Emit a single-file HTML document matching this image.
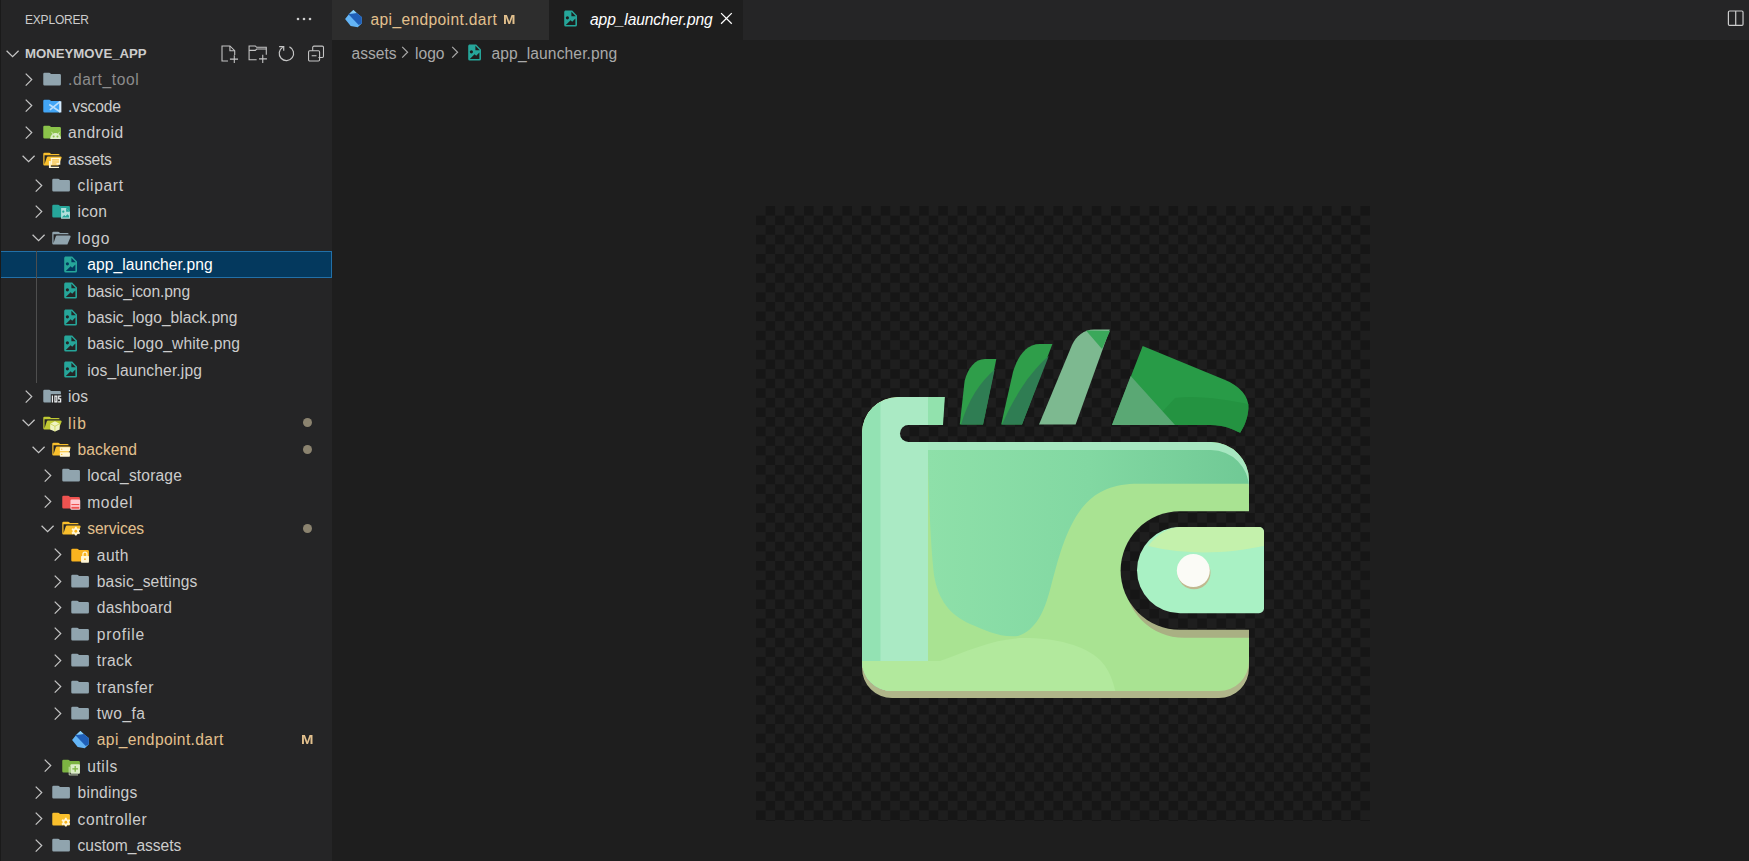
<!DOCTYPE html>
<html><head><meta charset="utf-8"><style>
*{margin:0;padding:0;box-sizing:border-box}
html,body{width:1749px;height:861px;overflow:hidden;background:#1e1e1e;font-family:"Liberation Sans", sans-serif}
#side{position:absolute;left:0;top:0;width:332px;height:861px;background:#252526;overflow:hidden}
#side .edge{position:absolute;left:0;top:0;width:1px;height:861px;background:#1a1a1a}
.title{position:absolute;left:25px;top:13px;font-size:12px;line-height:14px;color:#cccccc;letter-spacing:-0.2px}
.more{position:absolute;left:296px;top:17px;width:16px;height:4px}
.hdr{position:absolute;left:0;top:40px;width:332px;height:26.4px}
.hdr .t{position:absolute;left:25px;top:1px;font-size:13.2px;line-height:26.4px;font-weight:700;color:#cccccc}
.row{position:absolute;left:0;width:332px;height:26.4px}
.row.sel{background:#04395e;outline:1px solid #2270a8;outline-offset:-1px}
.row span{position:absolute;top:0}
.row .lbl{top:1px}
.chev,.ic{height:26.4px;display:flex;align-items:center}
.lbl{font-size:15.6px;line-height:26.4px;white-space:pre}
.dot{left:302.7px;top:8.5px !important;width:9.4px;height:9.4px;border-radius:50%;background:#8b836f}
.badge{left:301px;top:1px !important;font-size:13px;font-weight:700;line-height:26.4px;color:#e2c08d;transform:scaleX(1.15);transform-origin:0 0}
.guide{position:absolute;width:1px;background:#4e4e4e}
#tabs{position:absolute;left:332px;top:0;width:1417px;height:40px;background:#252526}
.tab{position:absolute;top:0;height:40px}
.tab .ic{position:absolute;top:0}
.tab .tt{position:absolute;top:0;font-size:15.6px;line-height:39px;white-space:pre}
#crumbs{position:absolute;left:332px;top:40px;width:1417px;height:26.4px;background:#1e1e1e}
#crumbs span{position:absolute;top:1px;font-size:15.6px;line-height:26.4px;color:#a9a9a9;white-space:pre}
#img{position:absolute;left:756px;top:206px;width:614px;height:615px;
 background:conic-gradient(#161616 25%, #1e1e1e 0 50%, #161616 0 75%, #1e1e1e 0) 0 0/19.2px 19.2px}
#img svg{position:absolute;left:0;top:0}
</style></head><body>
<div id="side">
 <div class="title">EXPLORER</div>
 <svg class="more" viewBox="0 0 16 4"><circle cx="2" cy="2" r="1.3" fill="#cccccc"/><circle cx="8" cy="2" r="1.3" fill="#cccccc"/><circle cx="14" cy="2" r="1.3" fill="#cccccc"/></svg>
 <div class="hdr">
  <svg style="position:absolute;left:3.3px;top:3.6px" viewBox="0 0 16 16" width="19.2" height="19.2"><path d="M3 5.6 8 10.6 13 5.6" fill="none" stroke="#c5c5c5" stroke-width="1.05"/></svg>
  <span class="t">MONEYMOVE_APP</span>
  <svg style="position:absolute;left:219px;top:3.6px" viewBox="0 0 16 16" width="19.2" height="19.2" fill="none" stroke="#c5c5c5" stroke-width="0.9"><path d="M7.5 14.2H2.5V1.6H9.1L13.1 5.6V9.2"/><path d="M9.1 1.6V5.6H13.1"/><path d="M12.75 9.3V15.8M9.1 12.6H16.4"/></svg>
<svg style="position:absolute;left:248px;top:3.6px" viewBox="0 0 16 16" width="19.2" height="19.2" fill="none" stroke="#c5c5c5" stroke-width="0.9"><path d="M7.2 13.1H0.9V1.6H6.1L7.2 2.75H15.25V9"/><path d="M0.9 5.3H6.1L7.2 4.2H15.25"/><path d="M12.3 9V15.8M9.2 12.4H15.8"/></svg>
<svg style="position:absolute;left:277px;top:3.6px" viewBox="0 0 16 16" width="19.2" height="19.2" fill="none" stroke="#c5c5c5" stroke-width="1"><path d="M10.4 2.4A6 6 0 1 1 4.74 2.7"/><path d="M1.75 2.25H5.6V5.7"/></svg>
<svg style="position:absolute;left:306.5px;top:3.6px" viewBox="0 0 16 16" width="19.2" height="19.2" fill="none" stroke="#c5c5c5" stroke-width="0.9"><path d="M4.75 5.6V2.8a1 1 0 0 1 1-1h7a1 1 0 0 1 1 1v7.5a1 1 0 0 1-1 1h-3.2"/><rect x="1.3" y="5.6" width="9.2" height="8.6" rx="1"/><path d="M3.9 9.8h4"/></svg>
 </div>
 <div class="row" style="top:66.40px"><span class="chev" style="left:19.10px"><svg viewBox="0 0 16 16" width="19.2" height="19.2"><path d="M5.6 3 10.6 8 5.6 13" fill="none" stroke="#c5c5c5" stroke-width="1.05"/></svg></span><span class="ic" style="left:41.30px"><svg viewBox="0 0 32 32" width="20.2" height="20.2" style="margin-left:0.3px"><path fill="#90a4ae" d="M13.844 7.536l-1.288-1.072A2 2 0 0 0 11.276 6H4a2 2 0 0 0-2 2v16a2 2 0 0 0 2 2h24a2 2 0 0 0 2-2V10a2 2 0 0 0-2-2H15.124a2 2 0 0 1-1.28-.464z"/></svg></span><span class="lbl" style="left:68.00px;color:#8c8c8c;letter-spacing:0.644px">.dart_tool</span></div><div class="row" style="top:92.80px"><span class="chev" style="left:19.10px"><svg viewBox="0 0 16 16" width="19.2" height="19.2"><path d="M5.6 3 10.6 8 5.6 13" fill="none" stroke="#c5c5c5" stroke-width="1.05"/></svg></span><span class="ic" style="left:41.30px"><svg viewBox="0 0 32 32" width="20.2" height="20.2" style="margin-left:0.3px"><path fill="#42a5f5" d="M13.844 7.536l-1.288-1.072A2 2 0 0 0 11.276 6H4a2 2 0 0 0-2 2v16a2 2 0 0 0 2 2h24a2 2 0 0 0 2-2V10a2 2 0 0 0-2-2H15.124a2 2 0 0 1-1.28-.464z"/><path d="M11.5 13.5 28.5 25M12.5 22 28.5 9" stroke="#bbdefb" stroke-width="2.6" fill="none"/><rect x="27.3" y="8.5" width="3.4" height="17.5" fill="#d6ebfd"/></svg></span><span class="lbl" style="left:68.00px;color:#cccccc;letter-spacing:-0.117px">.vscode</span></div><div class="row" style="top:119.20px"><span class="chev" style="left:19.10px"><svg viewBox="0 0 16 16" width="19.2" height="19.2"><path d="M5.6 3 10.6 8 5.6 13" fill="none" stroke="#c5c5c5" stroke-width="1.05"/></svg></span><span class="ic" style="left:41.30px"><svg viewBox="0 0 32 32" width="20.2" height="20.2" style="margin-left:0.3px"><path fill="#8bc34a" d="M13.844 7.536l-1.288-1.072A2 2 0 0 0 11.276 6H4a2 2 0 0 0-2 2v16a2 2 0 0 0 2 2h24a2 2 0 0 0 2-2V10a2 2 0 0 0-2-2H15.124a2 2 0 0 1-1.28-.464z"/><path fill="#dcedc8" d="M13 27c0-6 4.5-9.5 8.5-9.5s8.5 3.5 8.5 9.5z"/><path d="M15 15.5l2.5 3.5M28 15.5l-2.5 3.5" stroke="#dcedc8" stroke-width="1.3"/><circle cx="18.5" cy="23" r="1.6" fill="#8bc34a"/><circle cx="24.5" cy="23" r="1.6" fill="#8bc34a"/></svg></span><span class="lbl" style="left:68.00px;color:#cccccc;letter-spacing:0.533px">android</span></div><div class="row" style="top:145.60px"><span class="chev" style="left:19.10px"><svg viewBox="0 0 16 16" width="19.2" height="19.2"><path d="M3 5.6 8 10.6 13 5.6" fill="none" stroke="#c5c5c5" stroke-width="1.05"/></svg></span><span class="ic" style="left:41.30px"><svg viewBox="0 0 32 32" width="20.2" height="20.2" style="margin-left:0.3px"><path fill="#f9bf2c" d="M28.967 12H9.442a2 2 0 0 0-1.898 1.368L4 24V10h24a2 2 0 0 0-2-2H15.124a2 2 0 0 1-1.28-.464l-1.288-1.072A2 2 0 0 0 11.276 6H4a2 2 0 0 0-2 2v16a2 2 0 0 0 2 2h22l4.805-11.212A2 2 0 0 0 28.967 12z"/><path fill="#fff6d5" d="M14 14h15v11H14z"/><path fill="#fff6d5" d="M11 19h3v9h13v2H11z"/><rect x="16" y="16.5" width="11" height="1.6" fill="#f6b21c"/><rect x="16" y="19.8" width="11" height="1.6" fill="#f6b21c"/><rect x="16" y="23" width="7" height="1.4" fill="#f6b21c"/></svg></span><span class="lbl" style="left:68.00px;color:#cccccc;letter-spacing:-0.260px">assets</span></div><div class="row" style="top:172.00px"><span class="chev" style="left:28.70px"><svg viewBox="0 0 16 16" width="19.2" height="19.2"><path d="M5.6 3 10.6 8 5.6 13" fill="none" stroke="#c5c5c5" stroke-width="1.05"/></svg></span><span class="ic" style="left:50.90px"><svg viewBox="0 0 32 32" width="20.2" height="20.2" style="margin-left:0.3px"><path fill="#90a4ae" d="M13.844 7.536l-1.288-1.072A2 2 0 0 0 11.276 6H4a2 2 0 0 0-2 2v16a2 2 0 0 0 2 2h24a2 2 0 0 0 2-2V10a2 2 0 0 0-2-2H15.124a2 2 0 0 1-1.28-.464z"/></svg></span><span class="lbl" style="left:77.60px;color:#cccccc;letter-spacing:0.633px">clipart</span></div><div class="row" style="top:198.40px"><span class="chev" style="left:28.70px"><svg viewBox="0 0 16 16" width="19.2" height="19.2"><path d="M5.6 3 10.6 8 5.6 13" fill="none" stroke="#c5c5c5" stroke-width="1.05"/></svg></span><span class="ic" style="left:50.90px"><svg viewBox="0 0 32 32" width="20.2" height="20.2" style="margin-left:0.3px"><path fill="#26a69a" d="M13.844 7.536l-1.288-1.072A2 2 0 0 0 11.276 6H4a2 2 0 0 0-2 2v16a2 2 0 0 0 2 2h24a2 2 0 0 0 2-2V10a2 2 0 0 0-2-2H15.124a2 2 0 0 1-1.28-.464z"/><path fill="#b2dfdb" d="M16 11h8l6 6v11H16z"/><circle cx="19.5" cy="17" r="1.8" fill="#26a69a"/><path fill="#26a69a" d="M17 26l4-4 2 2 3-3 2.5 2.5V26z"/><path fill="#26a69a" d="M24 11v6h6z"/></svg></span><span class="lbl" style="left:77.60px;color:#cccccc;letter-spacing:0.200px">icon</span></div><div class="row" style="top:224.80px"><span class="chev" style="left:28.70px"><svg viewBox="0 0 16 16" width="19.2" height="19.2"><path d="M3 5.6 8 10.6 13 5.6" fill="none" stroke="#c5c5c5" stroke-width="1.05"/></svg></span><span class="ic" style="left:50.90px"><svg viewBox="0 0 32 32" width="20.2" height="20.2" style="margin-left:0.3px"><path fill="#90a4ae" d="M28.967 12H9.442a2 2 0 0 0-1.898 1.368L4 24V10h24a2 2 0 0 0-2-2H15.124a2 2 0 0 1-1.28-.464l-1.288-1.072A2 2 0 0 0 11.276 6H4a2 2 0 0 0-2 2v16a2 2 0 0 0 2 2h22l4.805-11.212A2 2 0 0 0 28.967 12z"/></svg></span><span class="lbl" style="left:77.60px;color:#cccccc;letter-spacing:0.767px">logo</span></div><div class="row sel" style="top:251.20px"><span class="ic" style="left:60.50px"><svg viewBox="0 0 24 24" width="19.2" height="19.2"><path fill="#26a69a" d="M13 9h5.5L13 3.5V9M6 2h8l6 6v12a2 2 0 0 1-2 2H6a2 2 0 0 1-2-2V4c0-1.11.89-2 2-2m0 18h12v-8l-4 4-2-2-6 6M8 9a2 2 0 0 0-2 2 2 2 0 0 0 2 2 2 2 0 0 0 2-2 2 2 0 0 0-2-2z"/></svg></span><span class="lbl" style="left:87.20px;color:#ffffff;letter-spacing:0.100px">app_launcher.png</span></div><div class="row" style="top:277.60px"><span class="ic" style="left:60.50px"><svg viewBox="0 0 24 24" width="19.2" height="19.2"><path fill="#26a69a" d="M13 9h5.5L13 3.5V9M6 2h8l6 6v12a2 2 0 0 1-2 2H6a2 2 0 0 1-2-2V4c0-1.11.89-2 2-2m0 18h12v-8l-4 4-2-2-6 6M8 9a2 2 0 0 0-2 2 2 2 0 0 0 2 2 2 2 0 0 0 2-2 2 2 0 0 0-2-2z"/></svg></span><span class="lbl" style="left:87.20px;color:#cccccc;letter-spacing:-0.085px">basic_icon.png</span></div><div class="row" style="top:304.00px"><span class="ic" style="left:60.50px"><svg viewBox="0 0 24 24" width="19.2" height="19.2"><path fill="#26a69a" d="M13 9h5.5L13 3.5V9M6 2h8l6 6v12a2 2 0 0 1-2 2H6a2 2 0 0 1-2-2V4c0-1.11.89-2 2-2m0 18h12v-8l-4 4-2-2-6 6M8 9a2 2 0 0 0-2 2 2 2 0 0 0 2 2 2 2 0 0 0 2-2 2 2 0 0 0-2-2z"/></svg></span><span class="lbl" style="left:87.20px;color:#cccccc;letter-spacing:0.016px">basic_logo_black.png</span></div><div class="row" style="top:330.40px"><span class="ic" style="left:60.50px"><svg viewBox="0 0 24 24" width="19.2" height="19.2"><path fill="#26a69a" d="M13 9h5.5L13 3.5V9M6 2h8l6 6v12a2 2 0 0 1-2 2H6a2 2 0 0 1-2-2V4c0-1.11.89-2 2-2m0 18h12v-8l-4 4-2-2-6 6M8 9a2 2 0 0 0-2 2 2 2 0 0 0 2 2 2 2 0 0 0 2-2 2 2 0 0 0-2-2z"/></svg></span><span class="lbl" style="left:87.20px;color:#cccccc;letter-spacing:0.147px">basic_logo_white.png</span></div><div class="row" style="top:356.80px"><span class="ic" style="left:60.50px"><svg viewBox="0 0 24 24" width="19.2" height="19.2"><path fill="#26a69a" d="M13 9h5.5L13 3.5V9M6 2h8l6 6v12a2 2 0 0 1-2 2H6a2 2 0 0 1-2-2V4c0-1.11.89-2 2-2m0 18h12v-8l-4 4-2-2-6 6M8 9a2 2 0 0 0-2 2 2 2 0 0 0 2 2 2 2 0 0 0 2-2 2 2 0 0 0-2-2z"/></svg></span><span class="lbl" style="left:87.20px;color:#cccccc;letter-spacing:0.133px">ios_launcher.jpg</span></div><div class="row" style="top:383.20px"><span class="chev" style="left:19.10px"><svg viewBox="0 0 16 16" width="19.2" height="19.2"><path d="M5.6 3 10.6 8 5.6 13" fill="none" stroke="#c5c5c5" stroke-width="1.05"/></svg></span><span class="ic" style="left:41.30px"><svg viewBox="0 0 32 32" width="20.2" height="20.2" style="margin-left:0.3px"><path fill="#90a4ae" d="M13.844 7.536l-1.288-1.072A2 2 0 0 0 11.276 6H4a2 2 0 0 0-2 2v16a2 2 0 0 0 2 2h24a2 2 0 0 0 2-2V10a2 2 0 0 0-2-2H15.124a2 2 0 0 1-1.28-.464z"/><path fill="#252526" d="M14 13h17v15H14z"/><path fill="#eceff1" d="M15.5 15h2v11h-2zM19.5 15h5v11h-5zM21.5 17v7h1v-7zM25.5 15h5v2h-3v2.5h3V26h-5v-2h3v-2.5h-3z"/></svg></span><span class="lbl" style="left:68.00px;color:#cccccc;letter-spacing:0.050px">ios</span></div><div class="row" style="top:409.60px"><span class="chev" style="left:19.10px"><svg viewBox="0 0 16 16" width="19.2" height="19.2"><path d="M3 5.6 8 10.6 13 5.6" fill="none" stroke="#c5c5c5" stroke-width="1.05"/></svg></span><span class="ic" style="left:41.30px"><svg viewBox="0 0 32 32" width="20.2" height="20.2" style="margin-left:0.3px"><path fill="#c0ca33" d="M28.967 12H9.442a2 2 0 0 0-1.898 1.368L4 24V10h24a2 2 0 0 0-2-2H15.124a2 2 0 0 1-1.28-.464l-1.288-1.072A2 2 0 0 0 11.276 6H4a2 2 0 0 0-2 2v16a2 2 0 0 0 2 2h22l4.805-11.212A2 2 0 0 0 28.967 12z"/><path fill="#f0f4c3" d="M13 17l7.5-4 7.5 4v9l-7.5 3.5-7.5-3.5z"/><path d="M13 17l7.5 4 7.5-4M20.5 21v8.5" stroke="#c0ca33" stroke-width="1" fill="none"/></svg></span><span class="lbl" style="left:68.00px;color:#e2c08d;letter-spacing:1.100px">lib</span><span class="dot"></span></div><div class="row" style="top:436.00px"><span class="chev" style="left:28.70px"><svg viewBox="0 0 16 16" width="19.2" height="19.2"><path d="M3 5.6 8 10.6 13 5.6" fill="none" stroke="#c5c5c5" stroke-width="1.05"/></svg></span><span class="ic" style="left:50.90px"><svg viewBox="0 0 32 32" width="20.2" height="20.2" style="margin-left:0.3px"><path fill="#f9bf2c" d="M28.967 12H9.442a2 2 0 0 0-1.898 1.368L4 24V10h24a2 2 0 0 0-2-2H15.124a2 2 0 0 1-1.28-.464l-1.288-1.072A2 2 0 0 0 11.276 6H4a2 2 0 0 0-2 2v16a2 2 0 0 0 2 2h22l4.805-11.212A2 2 0 0 0 28.967 12z"/><rect x="14" y="13" width="16" height="6.5" rx="1" fill="#fff6d5"/><rect x="14" y="21" width="16" height="7" rx="1" fill="#fff6d5"/><circle cx="17" cy="16.2" r="1" fill="#f6b21c"/><circle cx="17" cy="24.5" r="1" fill="#f6b21c"/></svg></span><span class="lbl" style="left:77.60px;color:#e2c08d;letter-spacing:0.067px">backend</span><span class="dot"></span></div><div class="row" style="top:462.40px"><span class="chev" style="left:38.30px"><svg viewBox="0 0 16 16" width="19.2" height="19.2"><path d="M5.6 3 10.6 8 5.6 13" fill="none" stroke="#c5c5c5" stroke-width="1.05"/></svg></span><span class="ic" style="left:60.50px"><svg viewBox="0 0 32 32" width="20.2" height="20.2" style="margin-left:0.3px"><path fill="#90a4ae" d="M13.844 7.536l-1.288-1.072A2 2 0 0 0 11.276 6H4a2 2 0 0 0-2 2v16a2 2 0 0 0 2 2h24a2 2 0 0 0 2-2V10a2 2 0 0 0-2-2H15.124a2 2 0 0 1-1.28-.464z"/></svg></span><span class="lbl" style="left:87.20px;color:#cccccc;letter-spacing:0.158px">local_storage</span></div><div class="row" style="top:488.80px"><span class="chev" style="left:38.30px"><svg viewBox="0 0 16 16" width="19.2" height="19.2"><path d="M5.6 3 10.6 8 5.6 13" fill="none" stroke="#c5c5c5" stroke-width="1.05"/></svg></span><span class="ic" style="left:60.50px"><svg viewBox="0 0 32 32" width="20.2" height="20.2" style="margin-left:0.3px"><path fill="#ef5350" d="M13.844 7.536l-1.288-1.072A2 2 0 0 0 11.276 6H4a2 2 0 0 0-2 2v16a2 2 0 0 0 2 2h24a2 2 0 0 0 2-2V10a2 2 0 0 0-2-2H15.124a2 2 0 0 1-1.28-.464z"/><rect x="15" y="12" width="15.5" height="16" rx="2" fill="#ffcdd2"/><rect x="16.5" y="19" width="12.5" height="1.8" fill="#ef5350"/><rect x="16.5" y="23.5" width="12.5" height="3" fill="#ef5350"/></svg></span><span class="lbl" style="left:87.20px;color:#cccccc;letter-spacing:0.675px">model</span></div><div class="row" style="top:515.20px"><span class="chev" style="left:38.30px"><svg viewBox="0 0 16 16" width="19.2" height="19.2"><path d="M3 5.6 8 10.6 13 5.6" fill="none" stroke="#c5c5c5" stroke-width="1.05"/></svg></span><span class="ic" style="left:60.50px"><svg viewBox="0 0 32 32" width="20.2" height="20.2" style="margin-left:0.3px"><path fill="#f9bf2c" d="M28.967 12H9.442a2 2 0 0 0-1.898 1.368L4 24V10h24a2 2 0 0 0-2-2H15.124a2 2 0 0 1-1.28-.464l-1.288-1.072A2 2 0 0 0 11.276 6H4a2 2 0 0 0-2 2v16a2 2 0 0 0 2 2h22l4.805-11.212A2 2 0 0 0 28.967 12z"/><g transform="translate(23.5 21)"><path fill="#fff6d5" d="M-1.3-7h2.6l.5 2.2 1.6.9 2.1-.8 1.3 2.2-1.7 1.5v1.9l1.7 1.5-1.3 2.2-2.1-.8-1.6.9-.5 2.2h-2.6l-.5-2.2-1.6-.9-2.1.8-1.3-2.2 1.7-1.5v-1.9l-1.7-1.5 1.3-2.2 2.1.8 1.6-.9z"/><circle r="2.2" fill="#f6b21c"/></g></svg></span><span class="lbl" style="left:87.20px;color:#e2c08d;letter-spacing:-0.043px">services</span><span class="dot"></span></div><div class="row" style="top:541.60px"><span class="chev" style="left:47.90px"><svg viewBox="0 0 16 16" width="19.2" height="19.2"><path d="M5.6 3 10.6 8 5.6 13" fill="none" stroke="#c5c5c5" stroke-width="1.05"/></svg></span><span class="ic" style="left:70.10px"><svg viewBox="0 0 32 32" width="20.2" height="20.2" style="margin-left:0.3px"><path fill="#f9b31f" d="M13.844 7.536l-1.288-1.072A2 2 0 0 0 11.276 6H4a2 2 0 0 0-2 2v16a2 2 0 0 0 2 2h24a2 2 0 0 0 2-2V10a2 2 0 0 0-2-2H15.124a2 2 0 0 1-1.28-.464z"/><rect x="17.5" y="17.5" width="12.5" height="10.5" rx="1" fill="#fff6d5"/><path d="M20.5 17.5v-3a3.2 3.2 0 0 1 6.4 0v3" fill="none" stroke="#fff6d5" stroke-width="2"/><circle cx="23.7" cy="22.5" r="1.4" fill="#f6b21c"/></svg></span><span class="lbl" style="left:96.80px;color:#cccccc;letter-spacing:0.433px">auth</span></div><div class="row" style="top:568.00px"><span class="chev" style="left:47.90px"><svg viewBox="0 0 16 16" width="19.2" height="19.2"><path d="M5.6 3 10.6 8 5.6 13" fill="none" stroke="#c5c5c5" stroke-width="1.05"/></svg></span><span class="ic" style="left:70.10px"><svg viewBox="0 0 32 32" width="20.2" height="20.2" style="margin-left:0.3px"><path fill="#90a4ae" d="M13.844 7.536l-1.288-1.072A2 2 0 0 0 11.276 6H4a2 2 0 0 0-2 2v16a2 2 0 0 0 2 2h24a2 2 0 0 0 2-2V10a2 2 0 0 0-2-2H15.124a2 2 0 0 1-1.28-.464z"/></svg></span><span class="lbl" style="left:96.80px;color:#cccccc;letter-spacing:0.131px">basic_settings</span></div><div class="row" style="top:594.40px"><span class="chev" style="left:47.90px"><svg viewBox="0 0 16 16" width="19.2" height="19.2"><path d="M5.6 3 10.6 8 5.6 13" fill="none" stroke="#c5c5c5" stroke-width="1.05"/></svg></span><span class="ic" style="left:70.10px"><svg viewBox="0 0 32 32" width="20.2" height="20.2" style="margin-left:0.3px"><path fill="#90a4ae" d="M13.844 7.536l-1.288-1.072A2 2 0 0 0 11.276 6H4a2 2 0 0 0-2 2v16a2 2 0 0 0 2 2h24a2 2 0 0 0 2-2V10a2 2 0 0 0-2-2H15.124a2 2 0 0 1-1.28-.464z"/></svg></span><span class="lbl" style="left:96.80px;color:#cccccc;letter-spacing:0.188px">dashboard</span></div><div class="row" style="top:620.80px"><span class="chev" style="left:47.90px"><svg viewBox="0 0 16 16" width="19.2" height="19.2"><path d="M5.6 3 10.6 8 5.6 13" fill="none" stroke="#c5c5c5" stroke-width="1.05"/></svg></span><span class="ic" style="left:70.10px"><svg viewBox="0 0 32 32" width="20.2" height="20.2" style="margin-left:0.3px"><path fill="#90a4ae" d="M13.844 7.536l-1.288-1.072A2 2 0 0 0 11.276 6H4a2 2 0 0 0-2 2v16a2 2 0 0 0 2 2h24a2 2 0 0 0 2-2V10a2 2 0 0 0-2-2H15.124a2 2 0 0 1-1.28-.464z"/></svg></span><span class="lbl" style="left:96.80px;color:#cccccc;letter-spacing:0.833px">profile</span></div><div class="row" style="top:647.20px"><span class="chev" style="left:47.90px"><svg viewBox="0 0 16 16" width="19.2" height="19.2"><path d="M5.6 3 10.6 8 5.6 13" fill="none" stroke="#c5c5c5" stroke-width="1.05"/></svg></span><span class="ic" style="left:70.10px"><svg viewBox="0 0 32 32" width="20.2" height="20.2" style="margin-left:0.3px"><path fill="#90a4ae" d="M13.844 7.536l-1.288-1.072A2 2 0 0 0 11.276 6H4a2 2 0 0 0-2 2v16a2 2 0 0 0 2 2h24a2 2 0 0 0 2-2V10a2 2 0 0 0-2-2H15.124a2 2 0 0 1-1.28-.464z"/></svg></span><span class="lbl" style="left:96.80px;color:#cccccc;letter-spacing:0.350px">track</span></div><div class="row" style="top:673.60px"><span class="chev" style="left:47.90px"><svg viewBox="0 0 16 16" width="19.2" height="19.2"><path d="M5.6 3 10.6 8 5.6 13" fill="none" stroke="#c5c5c5" stroke-width="1.05"/></svg></span><span class="ic" style="left:70.10px"><svg viewBox="0 0 32 32" width="20.2" height="20.2" style="margin-left:0.3px"><path fill="#90a4ae" d="M13.844 7.536l-1.288-1.072A2 2 0 0 0 11.276 6H4a2 2 0 0 0-2 2v16a2 2 0 0 0 2 2h24a2 2 0 0 0 2-2V10a2 2 0 0 0-2-2H15.124a2 2 0 0 1-1.28-.464z"/></svg></span><span class="lbl" style="left:96.80px;color:#cccccc;letter-spacing:0.543px">transfer</span></div><div class="row" style="top:700.00px"><span class="chev" style="left:47.90px"><svg viewBox="0 0 16 16" width="19.2" height="19.2"><path d="M5.6 3 10.6 8 5.6 13" fill="none" stroke="#c5c5c5" stroke-width="1.05"/></svg></span><span class="ic" style="left:70.10px"><svg viewBox="0 0 32 32" width="20.2" height="20.2" style="margin-left:0.3px"><path fill="#90a4ae" d="M13.844 7.536l-1.288-1.072A2 2 0 0 0 11.276 6H4a2 2 0 0 0-2 2v16a2 2 0 0 0 2 2h24a2 2 0 0 0 2-2V10a2 2 0 0 0-2-2H15.124a2 2 0 0 1-1.28-.464z"/></svg></span><span class="lbl" style="left:96.80px;color:#cccccc;letter-spacing:0.440px">two_fa</span></div><div class="row" style="top:726.40px"><span class="ic" style="left:70.10px"><svg viewBox="0 0 24 24" width="19.2" height="19.2"><path fill="#64b5f6" d="M13 1.25 17.1 5.1 23.4 10.1 23.4 18.25 18.4 22.75 9.6 21.4 2.6 12.6 7.9 5.9z"/><path fill="#1f5fb8" d="M7.9 5.9 17.1 5.1 23.4 10.1 23.4 18.25 19.6 20.1 6.5 6.4z"/><path fill="#86cdf9" d="M7.9 5.9 13 1.25 17.1 5.1z"/></svg></span><span class="lbl" style="left:96.80px;color:#e2c08d;letter-spacing:0.375px">api_endpoint.dart</span><span class="badge">M</span></div><div class="row" style="top:752.80px"><span class="chev" style="left:38.30px"><svg viewBox="0 0 16 16" width="19.2" height="19.2"><path d="M5.6 3 10.6 8 5.6 13" fill="none" stroke="#c5c5c5" stroke-width="1.05"/></svg></span><span class="ic" style="left:60.50px"><svg viewBox="0 0 32 32" width="20.2" height="20.2" style="margin-left:0.3px"><path fill="#7cb342" d="M13.844 7.536l-1.288-1.072A2 2 0 0 0 11.276 6H4a2 2 0 0 0-2 2v16a2 2 0 0 0 2 2h24a2 2 0 0 0 2-2V10a2 2 0 0 0-2-2H15.124a2 2 0 0 1-1.28-.464z"/><rect x="15" y="13" width="15" height="15" rx="1.5" fill="#dcedc8"/><path d="M22.5 16v9M18 20.5h9" stroke="#7cb342" stroke-width="2"/><path d="M13 17v13h14" fill="none" stroke="#dcedc8" stroke-width="1.3"/></svg></span><span class="lbl" style="left:87.20px;color:#cccccc;letter-spacing:0.575px">utils</span></div><div class="row" style="top:779.20px"><span class="chev" style="left:28.70px"><svg viewBox="0 0 16 16" width="19.2" height="19.2"><path d="M5.6 3 10.6 8 5.6 13" fill="none" stroke="#c5c5c5" stroke-width="1.05"/></svg></span><span class="ic" style="left:50.90px"><svg viewBox="0 0 32 32" width="20.2" height="20.2" style="margin-left:0.3px"><path fill="#90a4ae" d="M13.844 7.536l-1.288-1.072A2 2 0 0 0 11.276 6H4a2 2 0 0 0-2 2v16a2 2 0 0 0 2 2h24a2 2 0 0 0 2-2V10a2 2 0 0 0-2-2H15.124a2 2 0 0 1-1.28-.464z"/></svg></span><span class="lbl" style="left:77.60px;color:#cccccc;letter-spacing:0.229px">bindings</span></div><div class="row" style="top:805.60px"><span class="chev" style="left:28.70px"><svg viewBox="0 0 16 16" width="19.2" height="19.2"><path d="M5.6 3 10.6 8 5.6 13" fill="none" stroke="#c5c5c5" stroke-width="1.05"/></svg></span><span class="ic" style="left:50.90px"><svg viewBox="0 0 32 32" width="20.2" height="20.2" style="margin-left:0.3px"><path fill="#f9bf2c" d="M13.844 7.536l-1.288-1.072A2 2 0 0 0 11.276 6H4a2 2 0 0 0-2 2v16a2 2 0 0 0 2 2h24a2 2 0 0 0 2-2V10a2 2 0 0 0-2-2H15.124a2 2 0 0 1-1.28-.464z"/><g transform="translate(23.5 21)"><path fill="#fff6d5" d="M-1.3-7h2.6l.5 2.2 1.6.9 2.1-.8 1.3 2.2-1.7 1.5v1.9l1.7 1.5-1.3 2.2-2.1-.8-1.6.9-.5 2.2h-2.6l-.5-2.2-1.6-.9-2.1.8-1.3-2.2 1.7-1.5v-1.9l-1.7-1.5 1.3-2.2 2.1.8 1.6-.9z"/><circle r="2.2" fill="#f6b21c"/></g></svg></span><span class="lbl" style="left:77.60px;color:#cccccc;letter-spacing:0.544px">controller</span></div><div class="row" style="top:832.00px"><span class="chev" style="left:28.70px"><svg viewBox="0 0 16 16" width="19.2" height="19.2"><path d="M5.6 3 10.6 8 5.6 13" fill="none" stroke="#c5c5c5" stroke-width="1.05"/></svg></span><span class="ic" style="left:50.90px"><svg viewBox="0 0 32 32" width="20.2" height="20.2" style="margin-left:0.3px"><path fill="#90a4ae" d="M13.844 7.536l-1.288-1.072A2 2 0 0 0 11.276 6H4a2 2 0 0 0-2 2v16a2 2 0 0 0 2 2h24a2 2 0 0 0 2-2V10a2 2 0 0 0-2-2H15.124a2 2 0 0 1-1.28-.464z"/></svg></span><span class="lbl" style="left:77.60px;color:#cccccc;letter-spacing:-0.017px">custom_assets</span></div>
 <div class="guide" style="left:35.5px;top:251.20px;height:132.00px"></div>
 <div class="edge"></div>
</div>
<div id="tabs">
 <div class="tab" style="left:0;width:217px;background:#2d2d2d">
  <span class="ic" style="left:11.3px;top:5.3px"><svg viewBox="0 0 24 24" width="19.2" height="19.2"><path fill="#64b5f6" d="M13 1.25 17.1 5.1 23.4 10.1 23.4 18.25 18.4 22.75 9.6 21.4 2.6 12.6 7.9 5.9z"/><path fill="#1f5fb8" d="M7.9 5.9 17.1 5.1 23.4 10.1 23.4 18.25 19.6 20.1 6.5 6.4z"/><path fill="#86cdf9" d="M7.9 5.9 13 1.25 17.1 5.1z"/></svg></span>
  <span class="tt" style="left:38.5px;color:#e2c08d;letter-spacing:0.36px">api_endpoint.dart</span>
  <span class="tt" style="left:170.5px;color:#e2c08d;font-size:13px;font-weight:700;transform:scaleX(1.15);transform-origin:0 0">M</span>
 </div>
 <div class="tab" style="left:217px;width:194px;background:#1e1e1e">
  <span class="ic" style="left:11.5px;top:5px"><svg viewBox="0 0 24 24" width="19.2" height="19.2"><path fill="#26a69a" d="M13 9h5.5L13 3.5V9M6 2h8l6 6v12a2 2 0 0 1-2 2H6a2 2 0 0 1-2-2V4c0-1.11.89-2 2-2m0 18h12v-8l-4 4-2-2-6 6M8 9a2 2 0 0 0-2 2 2 2 0 0 0 2 2 2 2 0 0 0 2-2 2 2 0 0 0-2-2z"/></svg></span>
  <span class="tt" style="left:41px;color:#ffffff;font-style:italic;letter-spacing:-0.1px">app_launcher.png</span>
  <svg style="position:absolute;left:168px;top:8.8px" viewBox="0 0 16 16" width="19.2" height="19.2" stroke="#ffffff" stroke-width="1.05"><path d="M3.4 3.4l8.9 8.9M12.3 3.4l-8.9 8.9"/></svg>
 </div>
 <svg style="position:absolute;left:1394px;top:7.6px" viewBox="0 0 16 16" width="19.2" height="19.2" fill="none" stroke="#cccccc" stroke-width="1"><rect x="2" y="2.5" width="12.2" height="12" rx="1"/><path d="M8.1 2.5v12"/></svg>
</div>
<div id="crumbs">
 <span style="left:19.5px">assets</span>
 <svg style="position:absolute;left:62.5px;top:2.6px" viewBox="0 0 16 16" width="19.2" height="19.2"><path d="M6 3.2 10.5 7.7 6 12.2" fill="none" stroke="#a9a9a9" stroke-width="1"/></svg>
 <span style="left:83px">logo</span>
 <svg style="position:absolute;left:113px;top:2.6px" viewBox="0 0 16 16" width="19.2" height="19.2"><path d="M6 3.2 10.5 7.7 6 12.2" fill="none" stroke="#a9a9a9" stroke-width="1"/></svg>
 <span class="ic" style="position:absolute;left:133px;top:-0.4px"><svg viewBox="0 0 24 24" width="19.2" height="19.2"><path fill="#26a69a" d="M13 9h5.5L13 3.5V9M6 2h8l6 6v12a2 2 0 0 1-2 2H6a2 2 0 0 1-2-2V4c0-1.11.89-2 2-2m0 18h12v-8l-4 4-2-2-6 6M8 9a2 2 0 0 0-2 2 2 2 0 0 0 2 2 2 2 0 0 0 2-2 2 2 0 0 0-2-2z"/></svg></span>
 <span style="left:159.5px;letter-spacing:0.12px">app_launcher.png</span>
</div>
<div id="img"><svg width="614" height="615" viewBox="756 206 614 615">
<defs>
<mask id="wm" maskUnits="userSpaceOnUse" x="756" y="206" width="614" height="615">
 <rect x="756" y="206" width="614" height="615" fill="#fff"/>
 <path d="M908.5 425H1260V442H908.5A8.5 8.5 0 0 1 908.5 425Z" fill="#000"/>
 <path d="M946 380H1260V425H943Z" fill="#000"/>
 <path d="M1179.8 511.3H1260V629.8H1179.8A59.25 59.25 0 0 1 1179.8 511.3Z" fill="#000"/>
</mask>
<clipPath id="bodyin"><path d="M862 433A36 36 0 0 1 898 397H946V442H1211A38 38 0 0 1 1249 480V661A30 30 0 0 1 1219 691H892A30 30 0 0 1 862 661Z"/></clipPath>
<clipPath id="bodyc"><path d="M862 433A36 36 0 0 1 898 397H946V442H1211A38 38 0 0 1 1249 480V668A30 30 0 0 1 1219 698H892A30 30 0 0 1 862 668Z"/></clipPath>
<linearGradient id="mint" x1="928" y1="0" x2="1249" y2="0" gradientUnits="userSpaceOnUse"><stop offset="0" stop-color="#8ee0a9"/><stop offset="0.5" stop-color="#82d8a2"/><stop offset="1" stop-color="#70c995"/></linearGradient>
</defs>
<g mask="url(#wm)">
 <g clip-path="url(#bodyc)">
  <rect x="856" y="390" width="400" height="320" fill="#b0b68a"/>
  <g clip-path="url(#bodyin)">
  <rect x="856" y="390" width="400" height="320" fill="#a9e392"/>
  <!-- top mint band + dark blob -->
  <path d="M920 442H1260V483.7H1134C1110 485 1095 492 1082 508C1065 530 1058 560 1050 590C1044 612 1036 630 1018 636C1000 638 985 630 970 624C950 615 938 600 934 575C930 540 928 480 928 442Z" fill="url(#mint)"/>
  
  <!-- lower light bump -->
  
  <!-- front top highlight -->
  <path d="M920 442H1211A38 38 0 0 1 1249 480V488A38 38 0 0 0 1211 450H920Z" fill="#a7e7c1"/>
  <!-- left strip -->
  <rect x="856" y="390" width="72" height="320" fill="#aaeac4"/>
  <rect x="856" y="390" width="24.5" height="320" fill="#93e2b3"/>
  <path d="M856 661H940C965 652 995 638 1024 638C1055 638 1085 645 1100 660C1108 668 1114 680 1117 700H856Z" fill="#b2e99d"/>
  <rect x="928" y="390" width="20" height="35" fill="#92e2ad"/>
  </g>
  <!-- tan shadow under clasp cut -->
  <path d="M1183.8 519.3H1264V637.8H1183.8A59.25 59.25 0 0 1 1183.8 519.3Z" fill="#a9b083"/>
 </g>
</g>
<!-- clasp tab -->
<path d="M1180.1 527H1259A5 5 0 0 1 1264 532V608.3A5 5 0 0 1 1259 613.3H1180.1A43.15 43.15 0 0 1 1180.1 527Z" fill="#a9f1c4"/>
<path d="M1180.1 527H1259A5 5 0 0 1 1264 532V546C1230 553 1190 556 1148 546C1158 533 1170 527 1180.1 527Z" fill="#c7f1aa" opacity="0.9"/>
<circle cx="1194" cy="572.8" r="16.5" fill="#c0b88f"/>
<circle cx="1193.3" cy="570.6" r="16.5" fill="#fbfbf6"/>
<!-- bills -->
<path d="M959.8 424.6L964.6 381C968 368 975 359 985 359H996.3L983 424.6Z" fill="#2f9e4a"/>
<path d="M994.7 369.4L983 424.6H961C968 400 980 382 994.7 369.4Z" fill="#2f7d53"/>
<path d="M1001.2 424.6L1013 372C1018 356 1026 344 1040 344H1052.4L1022 424.6Z" fill="#2f9e4a"/>
<path d="M1048.8 356L1022 424.6H1002C1015 395 1030 372 1048.8 356Z" fill="#2f7d53"/>
<path d="M1039 424.6L1072 345C1076 336 1084 329.5 1094 329.5H1109.8L1075.6 424.6Z" fill="#7db990"/>
<path d="M1086 330.5L1110 331L1102 349Z" fill="#3aa85a"/>
<path d="M1112 425L1142.7 346L1224 379.5C1240 386 1249 396 1248.4 408C1248 417 1245 425 1240.2 432.8C1232 429 1225 425.3 1210 425Z" fill="#289b47"/>
<path d="M1150 425L1175 398C1200 395 1225 400 1248.6 404C1248.6 417 1245 425 1240.2 432.8C1232 429 1225 425.3 1210 425Z" fill="#22903f" opacity="0.7"/>
<path d="M1112 425L1130.7 376L1175 425Z" fill="#5aa874"/>
</svg>
</div>
</body></html>
